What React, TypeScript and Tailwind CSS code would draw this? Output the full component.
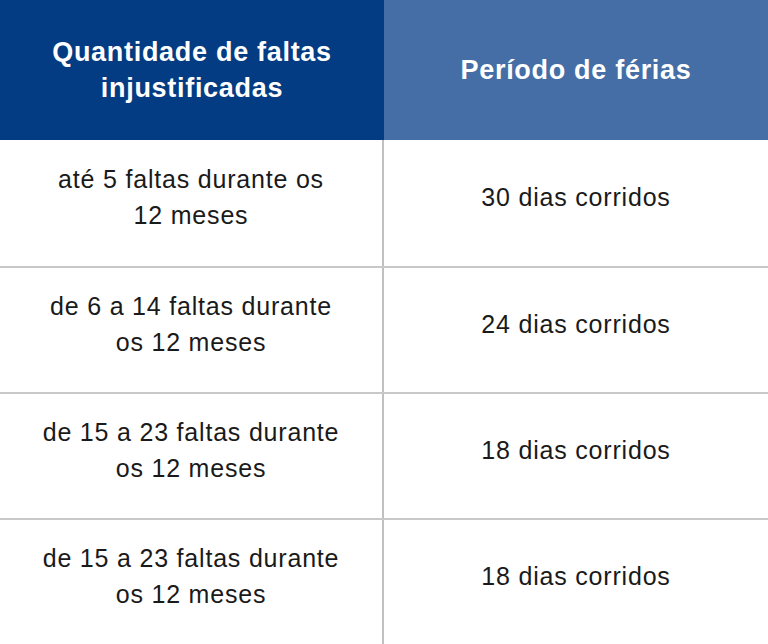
import React from "react";

type Row = { faltas: string[]; ferias: string };

const rows: Row[] = [
    { faltas: ["até 5 faltas durante os", "12 meses"], ferias: "30 dias corridos" },
    { faltas: ["de 6 a 14 faltas durante", "os 12 meses"], ferias: "24 dias corridos" },
    { faltas: ["de 15 a 23 faltas durante", "os 12 meses"], ferias: "18 dias corridos" },
    { faltas: ["de 15 a 23 faltas durante", "os 12 meses"], ferias: "18 dias corridos" },
];

export default function App() {
    return (
        <div className="w-[768px] h-[644px] bg-white overflow-hidden font-['Liberation_Sans',Arial,sans-serif]">
            <HeaderRow />
            {rows.map((row, i) => (
                <BodyRow key={i} row={row} first={i === 0} />
            ))}
        </div>
    );
}

function HeaderRow() {
    return (
        <div className="grid grid-cols-2 h-[140px] text-white font-bold text-[27px] leading-[36px] tracking-[0.7px] text-center">
            <div className="bg-[#043c83] flex flex-col items-center justify-center">
                <span>Quantidade de faltas</span>
                <span>injustificadas</span>
            </div>
            <div className="bg-[#446ea5] flex items-center justify-center">
                <span>Período de férias</span>
            </div>
        </div>
    );
}

function BodyRow({ row, first }: { row: Row; first: boolean }) {
    return (
        <div className={`grid grid-cols-2 h-[126px] text-[25px] leading-[36px] tracking-[0.8px] text-[#1a1a1a] text-center ${first ? "" : "border-t-2 border-[#c8c8c8]"}`}>
            <div className="flex flex-col items-center justify-center pb-3 border-r-2 border-[#c0c0c0]">
                {row.faltas.map((line, i) => (
                    <span key={i}>{line}</span>
                ))}
            </div>
            <div className="flex items-center justify-center pb-3">
                <span>{row.ferias}</span>
            </div>
        </div>
    );
}
